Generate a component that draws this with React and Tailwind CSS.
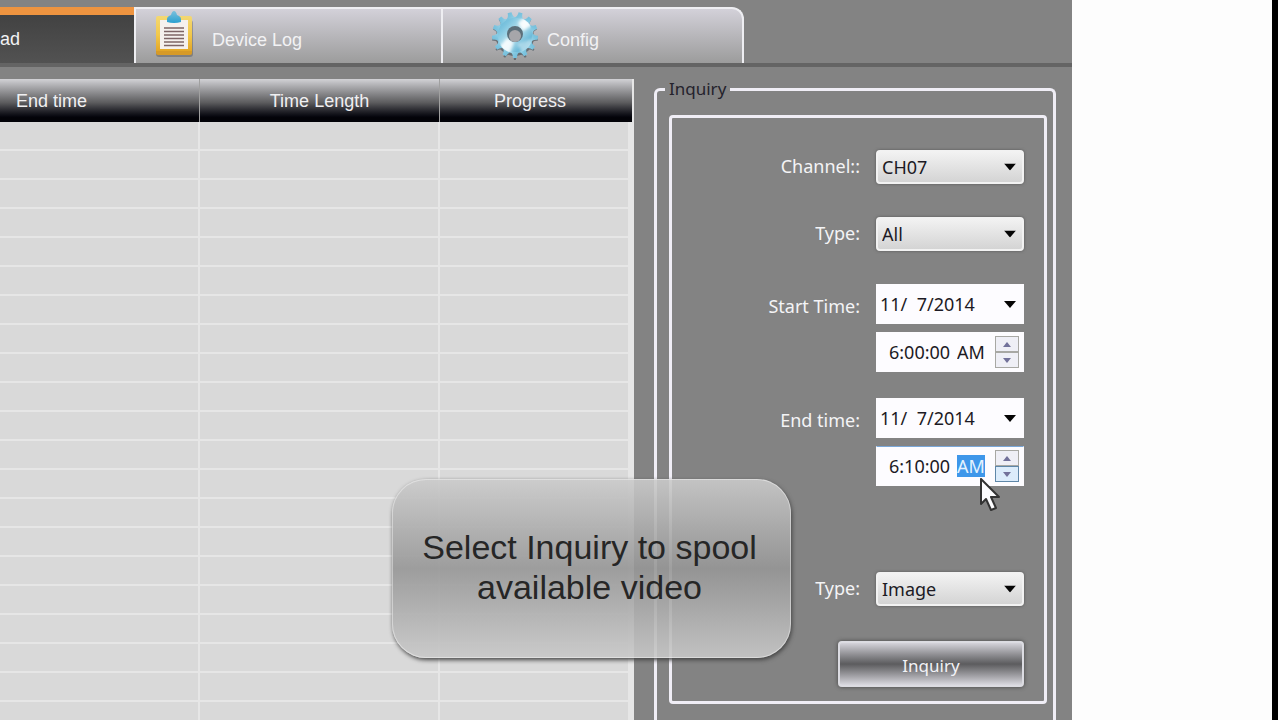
import React, { useState } from 'react';

const ROWS = Array.from({ length: 21 }, (_, i) => i);
const TEETH = Array.from({ length: 13 }, (_, i) => (i * 360) / 13);

function ClipboardIcon() {
  return (
    <svg width="44" height="50" viewBox="0 0 44 50" className="shrink-0" aria-hidden="true">
      <defs>
        <linearGradient id="board" x1="0" y1="0" x2="0" y2="1">
          <stop offset="0" stopColor="#f3d873" />
          <stop offset="0.5" stopColor="#f2c84a" />
          <stop offset="1" stopColor="#e0a020" />
        </linearGradient>
        <linearGradient id="clip" x1="0" y1="0" x2="0" y2="1">
          <stop offset="0" stopColor="#7cc0dc" />
          <stop offset="1" stopColor="#2aa0d0" />
        </linearGradient>
      </defs>
      <rect x="4" y="9" width="37" height="37" rx="3" fill="#000" opacity="0.22" />
      <rect x="4" y="5" width="36" height="38" rx="2" fill="url(#board)" />
      <path d="M8 9h28v29H8z" fill="#f5f1ee" />
      <path d="M4 40h36v2q0 2-2 2H6q-2 0-2-2z" fill="#d69a28" />
      <g stroke="#7d6566" strokeWidth="1.6">
        <path d="M12 17h20M12 20.500h20M12 24h20M12 27.500h20M12 31h20M12 34.500h20" />
      </g>
      <path d="M15 11V8q0-2 2-3l2-1q1-4 3-4t3 4l2 1q2 1 2 3v3q-7 2-14 0z" fill="url(#clip)" />
    </svg>
  );
}

function GearIcon() {
  return (
    <svg width="48" height="50" viewBox="0 0 48 50" className="shrink-0" aria-hidden="true">
      <defs>
        <linearGradient id="gear" x1="0" y1="0" x2="48" y2="46" gradientUnits="userSpaceOnUse">
          <stop offset="0" stopColor="#4fa2c8" />
          <stop offset="0.3" stopColor="#7cc4df" />
          <stop offset="0.5" stopColor="#b9e2ef" />
          <stop offset="0.7" stopColor="#6ebbd9" />
          <stop offset="1" stopColor="#9fd7e9" />
        </linearGradient>
        <clipPath id="wheel">
          <circle cx="24" cy="24" r="18" />
        </clipPath>
        <filter id="soft">
          <feGaussianBlur stdDeviation="1.5" />
        </filter>
      </defs>
      <g fill="#3f4a52" opacity="0.6" transform="translate(0 2)">
        <circle cx="24" cy="24" r="19" />
        {TEETH.map((a) => (
          <path key={a} d="M19 7q4-1 4-6h2q0 5 4 6z" transform={`rotate(${a + 14} 24 24)`} />
        ))}
      </g>
      <g fill="url(#gear)">
        <circle cx="24" cy="24" r="18" />
        {TEETH.map((a) => (
          <path key={a} d="M19 7q3-1 3-6h4q0 5 3 6z" transform={`rotate(${a + 14} 24 24)`} />
        ))}
      </g>
      <g clipPath="url(#wheel)">
        <g fill="#fff" filter="url(#soft)">
          <path d="M27 12l10-9 7 9-12 8z" opacity="0.9" />
          <path d="M5 40l11-13 7 4-5 14z" opacity="0.85" />
          <path d="M26 33l14-5 2 6-10 8z" opacity="0.4" />
        </g>
      </g>
      <circle cx="24" cy="23" r="8" fill="#5c6f7a" />
      <circle cx="24" cy="25" r="6" fill="#a6a6aa" />
    </svg>
  );
}

function Arrow({ className }) {
  return (
    <svg width="12" height="7" viewBox="0 0 12 7" className={className} aria-hidden="true">
      <path d="M0 0h12L6 7z" fill="#050505" />
    </svg>
  );
}

function Combo({ id, value, options, onChange }) {
  return (
    <div className="relative">
      <select
        id={id}
        value={value}
        onChange={(e) => onChange(e.target.value)}
        className="block h-[34px] w-full appearance-none rounded border-2 border-[#f2f2f2] bg-linear-to-b from-[#f2f2f2] to-[#d4d4d4] pl-1 text-lg leading-6 text-[#1c1a24] shadow-[0_0_3px_#555]"
      >
        {options.map((o) => (
          <option key={o}>{o}</option>
        ))}
      </select>
      <Arrow className="pointer-events-none absolute top-1/2 right-2 -translate-y-1/2" />
    </div>
  );
}

function DateBox({ id, value }) {
  const [date, setDate] = useState(value);
  return (
    <div className="flex h-10 items-center bg-[#fdfcff] pr-2 pl-1">
      <input
        id={id}
        value={date}
        onChange={(e) => setDate(e.target.value)}
        className="w-full min-w-0 bg-transparent text-lg leading-6 text-[#1c1a24] outline-none"
      />
      <button type="button" aria-label="Open calendar">
        <Arrow />
      </button>
    </div>
  );
}

function TimeBox({ label, value, selected }) {
  const [time, setTime] = useState(value);
  const [half, setHalf] = useState('AM');
  return (
    <div
      className={`flex h-10 items-center border bg-[#fdfcff] pr-1 pl-3 text-lg leading-5 text-[#1c1a24] ${
        selected ? 'border-[#fdfcff] border-t-[#7aa7d8]' : 'border-[#fdfcff]'
      }`}
    >
      <input
        aria-label={label}
        value={time}
        onChange={(e) => setTime(e.target.value)}
        className="h-5 w-[68px] bg-transparent outline-none"
      />
      <input
        aria-label={`${label} AM or PM`}
        value={half}
        onChange={(e) => setHalf(e.target.value)}
        className={`h-[22px] w-7 outline-none ${selected ? 'bg-[#3e97ea] text-[#e4f3ff]' : 'bg-transparent'}`}
      />
      <div className="ml-auto flex w-6 flex-col">
        <button
          type="button"
          aria-label="Increase"
          className="flex h-4 items-center justify-center border border-[#a8a8a4] bg-[#efeff6]"
        >
          <svg width="8" height="5" viewBox="0 0 8 5"><path d="M4 0l4 5H0z" fill="#72719a" /></svg>
        </button>
        <button
          type="button"
          aria-label="Decrease"
          className={`flex h-4 items-center justify-center border ${
            selected ? 'border-[#5f87a8] bg-[#dcecfb]' : 'border-[#a8a8a4] bg-[#efeff6]'
          }`}
        >
          <svg width="8" height="5" viewBox="0 0 8 5"><path d="M4 5L0 0h8z" fill="#72719a" /></svg>
        </button>
      </div>
    </div>
  );
}

function Row({ label, htmlFor, className, labelClass = 'pt-1', children }) {
  return (
    <div className={`flex items-start justify-end gap-4 ${className}`}>
      <label htmlFor={htmlFor} className={`text-lg leading-6 text-[#f4f4f6] ${labelClass}`}>{label}</label>
      <div className="flex w-[148px] flex-col gap-2">{children}</div>
    </div>
  );
}

function Tabs() {
  return (
    <nav className="flex h-[60px] shrink-0 items-stretch border-b-4 border-[#646464] font-['Liberation_Sans',sans-serif] text-lg leading-6 text-[#f2f2f4]">
      <a
        href="#download"
        className="flex w-[134px] items-center border-t-8 border-[#ee9440] bg-linear-to-b from-[#424242] to-[#525252]"
      >
        <span>ad</span>
      </a>
      <div className="flex w-[610px] overflow-hidden rounded-tr-xl border-t-2 border-r-2 border-[#eeeef2] bg-linear-to-b from-[#d3d1d9] to-[#9c9c9c]">
        <a href="#log" className="flex w-[309px] items-center gap-4 border-x-2 border-[#eeeef2] pl-4">
          <ClipboardIcon />
          <span className="pt-2">Device Log</span>
        </a>
        <a href="#config" className="flex flex-1 items-center gap-2 pl-12">
          <GearIcon />
          <span className="pt-2">Config</span>
        </a>
      </div>
    </nav>
  );
}

function LogTable() {
  return (
    <div className="w-[634px] shrink-0 overflow-hidden border-r-2 border-[#e6e6e6] bg-[#d9d9d9]">
      <table className="w-full table-fixed border-separate border-spacing-0">
        <colgroup>
          <col className="w-[200px]" />
          <col className="w-[240px]" />
          <col />
        </colgroup>
        <thead>
          <tr className="h-[43px] bg-linear-to-b from-[#d2d2d6] via-[#5c5c5e] via-55% to-[#030308] to-90% font-['Liberation_Sans',sans-serif] text-lg leading-6 text-[#f0f0f2]">
            <th className="border-r border-[#a0a0a0] pr-24 font-normal">End time</th>
            <th className="border-r border-[#a0a0a0] font-normal">Time Length</th>
            <th className="pr-3 font-normal">Progress</th>
          </tr>
        </thead>
        <tbody>
          {ROWS.map((r) => (
            <tr key={r} className="h-[29px]">
              <td className="border-r-2 border-b-2 border-[#e6e6e6]" />
              <td className="border-r-2 border-b-2 border-[#e6e6e6]" />
              <td className="border-r-4 border-b-2 border-[#e6e6e6]" />
            </tr>
          ))}
        </tbody>
      </table>
    </div>
  );
}

function InquiryForm() {
  const [channel, setChannel] = useState('CH07');
  const [type, setType] = useState('All');
  const [output, setOutput] = useState('Image');

  return (
    <fieldset className="min-w-0 flex-1 rounded-t-md border-[3px] border-b-0 border-[#f0eef6] pr-1.5 pl-3">
      <legend className="-ml-1 px-1 text-[17px] leading-5 text-[#24222c]">Inquiry</legend>
      <form
        onSubmit={(e) => e.preventDefault()}
        className="mt-4 rounded border-[3px] border-[#f0eef6] px-5 pt-8 pb-3.5"
      >
        <Row label="Channel::" htmlFor="channel">
          <Combo id="channel" value={channel} onChange={setChannel} options={['CH07', 'CH08']} />
        </Row>
        <Row label="Type:" htmlFor="type" className="mt-[33px]">
          <Combo id="type" value={type} onChange={setType} options={['All', 'Motion']} />
        </Row>
        <Row label="Start Time:" htmlFor="start-date" className="mt-[33px]" labelClass="pt-2.5">
          <DateBox id="start-date" value="11/  7/2014" />
          <TimeBox label="Start hour" value="6:00:00" />
        </Row>
        <Row label="End time:" htmlFor="end-date" className="mt-[26px]" labelClass="pt-2.5">
          <DateBox id="end-date" value="11/  7/2014" />
          <TimeBox label="End hour" value="6:10:00" selected />
        </Row>
        <Row label="Type:" htmlFor="output" className="mt-[86px]">
          <Combo id="output" value={output} onChange={setOutput} options={['Image', 'Video']} />
        </Row>
        <div className="mt-[35px] flex justify-end">
          <button
            type="submit"
            className="h-[46px] w-[186px] rounded border-2 border-[#dcdce2] bg-linear-to-b from-[#d4d3da] via-[#5c5c5e] to-[#dad9e0] pt-1 text-[17px] leading-5 text-[#f2f2f6] shadow-[0_0_4px_#444]"
          >
            Inquiry
          </button>
        </div>
      </form>
    </fieldset>
  );
}

export default function App() {
  return (
    <div className="relative flex h-screen overflow-hidden bg-white font-['Noto_Sans',sans-serif]">
      <main className="flex min-w-0 flex-1 flex-col bg-[#838383] pt-[7px]">
        <Tabs />
        <div className="flex min-h-0 flex-1 gap-5 pt-3 pr-4">
          <LogTable />
          <InquiryForm />
        </div>
      </main>
      <aside className="w-[206px] shrink-0 border-r-6 border-black bg-[#fdfdfd]" />

      {/* caption floating over the window */}
      <div className="absolute top-[479px] left-[392px] flex h-[179px] w-[399px] items-center justify-center rounded-[34px] border border-white/40 bg-linear-to-b from-[#cacaca]/90 via-[#969696]/90 to-[#c8c8c8]/90 pr-1 pb-1 text-center font-['Liberation_Sans',sans-serif] text-[34px] leading-10 text-[#262626] shadow-[1px_2px_4px_#444]">
        <p>Select Inquiry to spool<br />available video</p>
      </div>

      <svg width="22" height="34" viewBox="0 0 22 34" className="absolute top-[478px] left-[979px]" aria-hidden="true">
        <path d="M2 1v25l5-5 5 11 5-2-5-11h8z" fill="#fdfdff" stroke="#333" strokeWidth="2" strokeLinejoin="round" />
      </svg>
    </div>
  );
}
